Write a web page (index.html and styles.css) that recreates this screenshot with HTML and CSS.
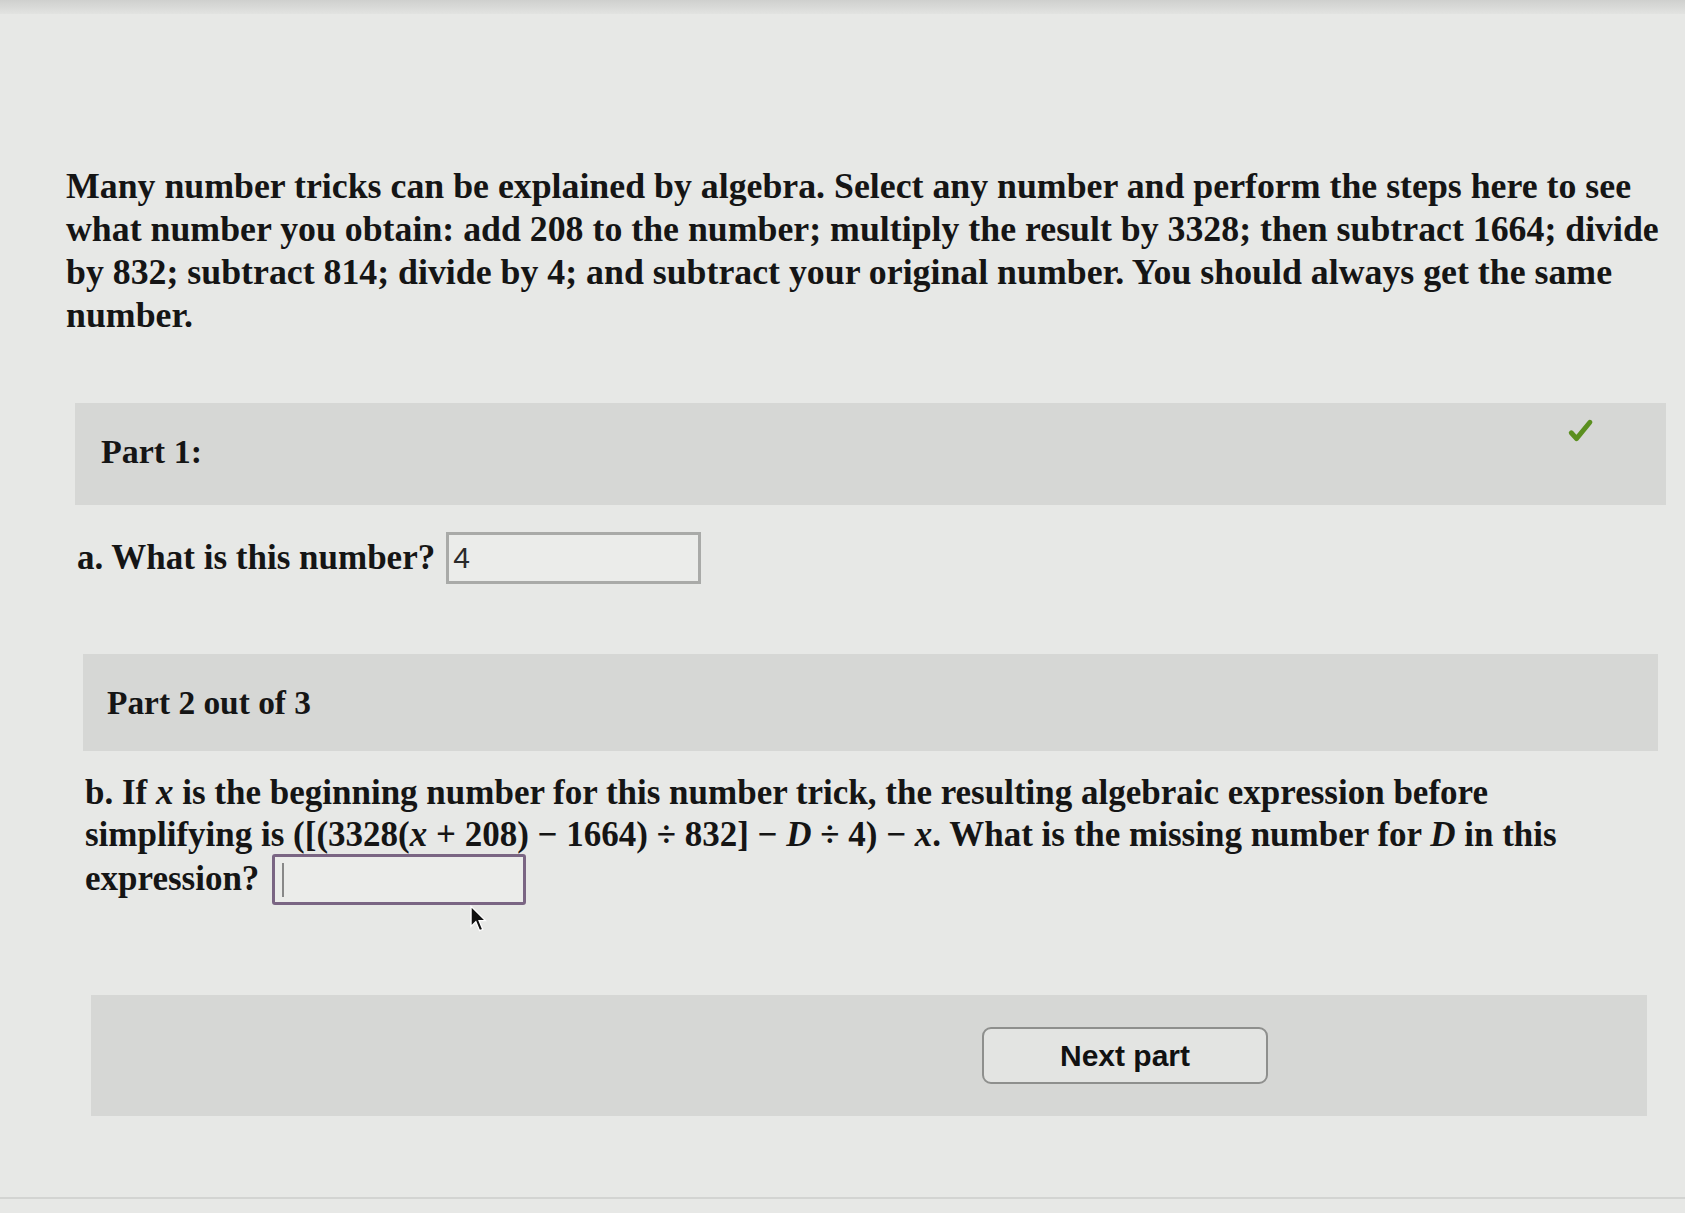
FILE: index.html
```html
<!DOCTYPE html>
<html lang="en">
<head>
<meta charset="utf-8">
<title>Number trick</title>
<link rel="stylesheet" href="styles.css">
</head>
<body>
<div class="topband"></div>
<main class="page">
  <p class="intro">Many number tricks can be explained by algebra. Select any number and perform the steps here to see what number you obtain: add 208 to the number; multiply the result by 3328; then subtract 1664; divide by 832; subtract 814; divide by 4; and subtract your original number. You should always get the same number.</p>

  <section class="bar bar-part1">
    <span class="bar-title title-1">Part 1:</span>
    <svg class="check" viewBox="0 0 24 24" width="28" height="28" aria-hidden="true">
      <path d="M4.5 13.5 L9 18.5 L20.5 4.5" fill="none" stroke="#5b8f1f" stroke-width="4.2" stroke-linecap="round" stroke-linejoin="round"/>
    </svg>
  </section>

  <div class="question q-a">
    <span>a. What is this number?</span>
    <span class="answer answer-a">4</span>
  </div>

  <section class="bar bar-part2">
    <span class="bar-title title-2">Part 2 out of 3</span>
  </section>

  <div class="question q-b">
    b. If <i>x</i> is the beginning number for this number trick, the resulting algebraic expression before simplifying is ([(3328(<i>x</i> + 208) − 1664) ÷ 832] − <i>D</i> ÷ 4) − <i>x</i>. What is the missing number for <i>D</i> in this expression? <span class="answer answer-b"><span class="caret"></span></span>
  </div>

  <section class="bar bar-next">
    <button class="next-btn" type="button">Next part</button>
  </section>
</main>
<svg class="cursor" viewBox="0 0 16 26" width="17" height="28" aria-hidden="true">
  <path d="M1 1 L1 20 L5.5 15.5 L9 24 L12 22.8 L8.5 14.5 L14.5 14.5 Z" fill="#111" stroke="#fff" stroke-width="1.2"/>
</svg>
<div class="bottomline"></div>
</body>
</html>
```

FILE: styles.css
```css
html, body {
  margin: 0;
  padding: 0;
}

body {
  background: #e7e8e6;
  font-family: "Liberation Serif", "Times New Roman", serif;
  color: #151515;
  width: 1685px;
  height: 1213px;
  overflow: hidden;
  position: relative;
}

.topband {
  height: 14px;
  background: linear-gradient(#cfd0ce, #e2e3e1);
}

.intro {
  margin: 151px 0 0 66px;
  width: 1615px;
  font-size: 35.8px;
  font-weight: bold;
  line-height: 43px;
}

.bar {
  background: #d6d7d5;
  display: flex;
  align-items: center;
  box-sizing: border-box;
}

.bar-title {
  font-weight: bold;
}

.title-1 {
  font-size: 34px;
}

.title-2 {
  font-size: 33.4px;
}

.bar-part1 {
  margin: 66px 0 0 75px;
  width: 1591px;
  height: 102px;
  padding: 0 0 0 26px;
  justify-content: space-between;
  align-items: flex-start;
}

.bar-part1 .bar-title {
  margin-top: 30px;
}

.check {
  margin: 14px 72px 0 0;
}

.question {
  font-weight: bold;
}

.q-a {
  margin: 27px 0 0 77px;
  display: flex;
  align-items: center;
  gap: 11px;
  font-size: 35px;
  line-height: 42px;
}

.answer {
  display: inline-block;
  box-sizing: border-box;
  vertical-align: middle;
  background: #ebecea;
}

.answer-a {
  width: 255px;
  height: 52px;
  border: 3px solid #a9aaa8;
  font-family: "Liberation Sans", Arial, sans-serif;
  font-weight: normal;
  font-size: 30px;
  line-height: 46px;
  color: #2a2a2a;
  padding-left: 4px;
}

.bar-part2 {
  margin: 70px 0 0 83px;
  width: 1575px;
  height: 97px;
  padding-left: 24px;
}

.q-b {
  margin: 21px 0 0 85px;
  width: 1505px;
  font-size: 35px;
  line-height: 42px;
}

.answer-b {
  width: 254px;
  height: 51px;
  border: 3px solid #7a6583;
  border-radius: 3px;
  margin-left: 4px;
  position: relative;
  top: -2px;
}

.caret {
  display: block;
  width: 2px;
  height: 34px;
  background: #888;
  margin: 6px 0 0 7px;
}

.bar-next {
  margin: 88px 0 0 91px;
  width: 1556px;
  height: 121px;
  padding-left: 891px;
  align-items: flex-start;
}

.next-btn {
  margin-top: 32px;
  width: 286px;
  height: 57px;
  border: 2px solid #8e8f8d;
  border-radius: 9px;
  background: #e3e4e2;
  font-family: "Liberation Sans", Arial, sans-serif;
  font-weight: bold;
  font-size: 30px;
  color: #111;
}

.cursor {
  position: absolute;
  left: 470px;
  top: 905px;
}

.bottomline {
  position: absolute;
  left: 0;
  right: 0;
  top: 1197px;
  height: 2px;
  background: #d3d4d2;
}
```
